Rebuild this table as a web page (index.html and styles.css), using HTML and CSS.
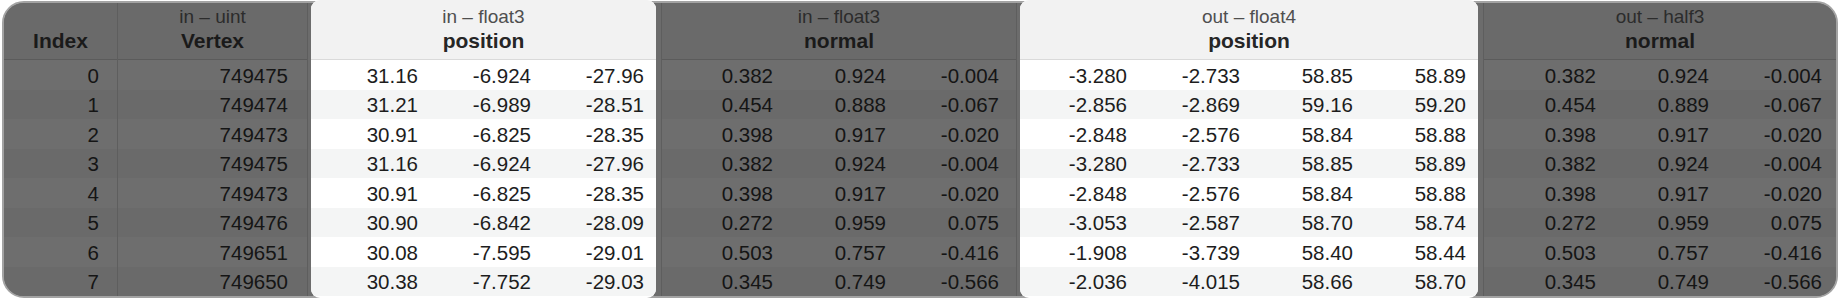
FILE: index.html
```html
<!DOCTYPE html>
<html>
<head>
<meta charset="utf-8">
<link rel="stylesheet" href="styles.css">
</head>
<body>
<div class="panel">
  <div class="group g-index dim">
    <div class="head"><div class="sub">&nbsp;</div><div class="title">Index</div></div>
    <div class="row"><span>0</span></div>
    <div class="row"><span>1</span></div>
    <div class="row"><span>2</span></div>
    <div class="row"><span>3</span></div>
    <div class="row"><span>4</span></div>
    <div class="row"><span>5</span></div>
    <div class="row"><span>6</span></div>
    <div class="row"><span>7</span></div>
  </div>
  <div class="group g-vertex dim">
    <div class="head"><div class="sub">in – uint</div><div class="title">Vertex</div></div>
    <div class="row"><span>749475</span></div>
    <div class="row"><span>749474</span></div>
    <div class="row"><span>749473</span></div>
    <div class="row"><span>749475</span></div>
    <div class="row"><span>749473</span></div>
    <div class="row"><span>749476</span></div>
    <div class="row"><span>749651</span></div>
    <div class="row"><span>749650</span></div>
  </div>
  <div class="group g-inpos lit">
    <div class="card">
      <div class="head"><div class="sub">in – float3</div><div class="title">position</div></div>
      <div class="row"><span>31.16</span><span>-6.924</span><span>-27.96</span></div>
      <div class="row"><span>31.21</span><span>-6.989</span><span>-28.51</span></div>
      <div class="row"><span>30.91</span><span>-6.825</span><span>-28.35</span></div>
      <div class="row"><span>31.16</span><span>-6.924</span><span>-27.96</span></div>
      <div class="row"><span>30.91</span><span>-6.825</span><span>-28.35</span></div>
      <div class="row"><span>30.90</span><span>-6.842</span><span>-28.09</span></div>
      <div class="row"><span>30.08</span><span>-7.595</span><span>-29.01</span></div>
      <div class="row"><span>30.38</span><span>-7.752</span><span>-29.03</span></div>
    </div>
  </div>
  <div class="group g-innorm dim">
    <div class="head"><div class="sub">in – float3</div><div class="title">normal</div></div>
    <div class="row"><span>0.382</span><span>0.924</span><span>-0.004</span></div>
    <div class="row"><span>0.454</span><span>0.888</span><span>-0.067</span></div>
    <div class="row"><span>0.398</span><span>0.917</span><span>-0.020</span></div>
    <div class="row"><span>0.382</span><span>0.924</span><span>-0.004</span></div>
    <div class="row"><span>0.398</span><span>0.917</span><span>-0.020</span></div>
    <div class="row"><span>0.272</span><span>0.959</span><span>0.075</span></div>
    <div class="row"><span>0.503</span><span>0.757</span><span>-0.416</span></div>
    <div class="row"><span>0.345</span><span>0.749</span><span>-0.566</span></div>
  </div>
  <div class="group g-outpos lit">
    <div class="card">
      <div class="head"><div class="sub">out – float4</div><div class="title">position</div></div>
      <div class="row"><span>-3.280</span><span>-2.733</span><span>58.85</span><span>58.89</span></div>
      <div class="row"><span>-2.856</span><span>-2.869</span><span>59.16</span><span>59.20</span></div>
      <div class="row"><span>-2.848</span><span>-2.576</span><span>58.84</span><span>58.88</span></div>
      <div class="row"><span>-3.280</span><span>-2.733</span><span>58.85</span><span>58.89</span></div>
      <div class="row"><span>-2.848</span><span>-2.576</span><span>58.84</span><span>58.88</span></div>
      <div class="row"><span>-3.053</span><span>-2.587</span><span>58.70</span><span>58.74</span></div>
      <div class="row"><span>-1.908</span><span>-3.739</span><span>58.40</span><span>58.44</span></div>
      <div class="row"><span>-2.036</span><span>-4.015</span><span>58.66</span><span>58.70</span></div>
    </div>
  </div>
  <div class="group g-outnorm dim">
    <div class="head"><div class="sub">out – half3</div><div class="title">normal</div></div>
    <div class="row"><span>0.382</span><span>0.924</span><span>-0.004</span></div>
    <div class="row"><span>0.454</span><span>0.889</span><span>-0.067</span></div>
    <div class="row"><span>0.398</span><span>0.917</span><span>-0.020</span></div>
    <div class="row"><span>0.382</span><span>0.924</span><span>-0.004</span></div>
    <div class="row"><span>0.398</span><span>0.917</span><span>-0.020</span></div>
    <div class="row"><span>0.272</span><span>0.959</span><span>0.075</span></div>
    <div class="row"><span>0.503</span><span>0.757</span><span>-0.416</span></div>
    <div class="row"><span>0.345</span><span>0.749</span><span>-0.566</span></div>
  </div>
</div>
</body>
</html>
```

FILE: styles.css
```css
html, body {
  margin: 0;
  padding: 0;
  background: #ffffff;
}

body {
  font-family: "Liberation Sans", Arial, sans-serif;
}

.panel {
  display: flex;
  box-sizing: border-box;
  width: 1836px;
  height: 297px;
  margin: 1px 0 0 2px;
  border: 2px solid #a3a3a3;
  border-radius: 22px;
  background: #6c6c6c;
}

.group {
  flex: none;
  box-sizing: border-box;
  display: flex;
  flex-direction: column;
  border-right: 1px solid #5e5e5e;
}

.g-index {
  width: 114px;
  border-radius: 20px 0 0 20px;
  overflow: hidden;
}

.g-vertex { width: 190px; }
.g-inpos { width: 354px; }
.g-innorm { width: 355px; }
.g-outpos { width: 467px; }

.g-outnorm {
  width: 352px;
  border-right: none;
  border-radius: 0 20px 20px 0;
  overflow: hidden;
}

/* header */
.head {
  flex: none;
  box-sizing: border-box;
  text-align: center;
  white-space: nowrap;
}

.sub {
  font-size: 19px;
  line-height: 22px;
}

.title {
  font-size: 21px;
  line-height: 26px;
  font-weight: bold;
}

/* rows */
.row {
  flex: none;
  box-sizing: border-box;
  height: 29.5px;
  padding-top: 1.5px;
  font-size: 20.5px;
  line-height: 28px;
  display: grid;
  justify-content: end;
  white-space: nowrap;
}

.row span {
  text-align: right;
}

.g-index .row { grid-template-columns: auto; padding-right: 18px; }
.g-vertex .row { grid-template-columns: auto; padding-right: 19px; }
.g-inpos .row { grid-template-columns: repeat(3, 113px); padding-right: 12px; }
.g-innorm .row { grid-template-columns: repeat(3, 113px); padding-right: 17px; }
.g-outpos .row { grid-template-columns: repeat(4, 113px); padding-right: 12px; }
.g-outnorm .row { grid-template-columns: repeat(3, 113px); padding-right: 14px; }

/* dimmed groups */
.dim .head {
  height: 57px;
  padding-top: 2.5px;
  background: #6a6a6a;
  border-bottom: 1px solid #5b5b5b;
}

.dim .sub { color: #2c2c2c; }
.dim .title { color: #1a1a1a; }

.dim .row {
  color: #151515;
  background: #6e6e6e;
}

.dim .row:nth-child(odd) {
  background: #6a6a6a;
}

/* highlighted groups */
.card {
  flex: 1;
  display: flex;
  flex-direction: column;
  margin: -3px 5px -2px 3px;
  background: #ffffff;
  border-radius: 9px;
  overflow: hidden;
}

.lit .head {
  height: 60px;
  padding-top: 5.5px;
  background: #f2f2f2;
  border-bottom: 1px solid #dadada;
}

.lit .sub { color: #4f4f4f; }
.lit .title { color: #262626; }

.lit .row {
  color: #1d1d1d;
  background: #ffffff;
}

.lit .row:nth-child(odd) {
  background: #f4f5f5;
}
```
